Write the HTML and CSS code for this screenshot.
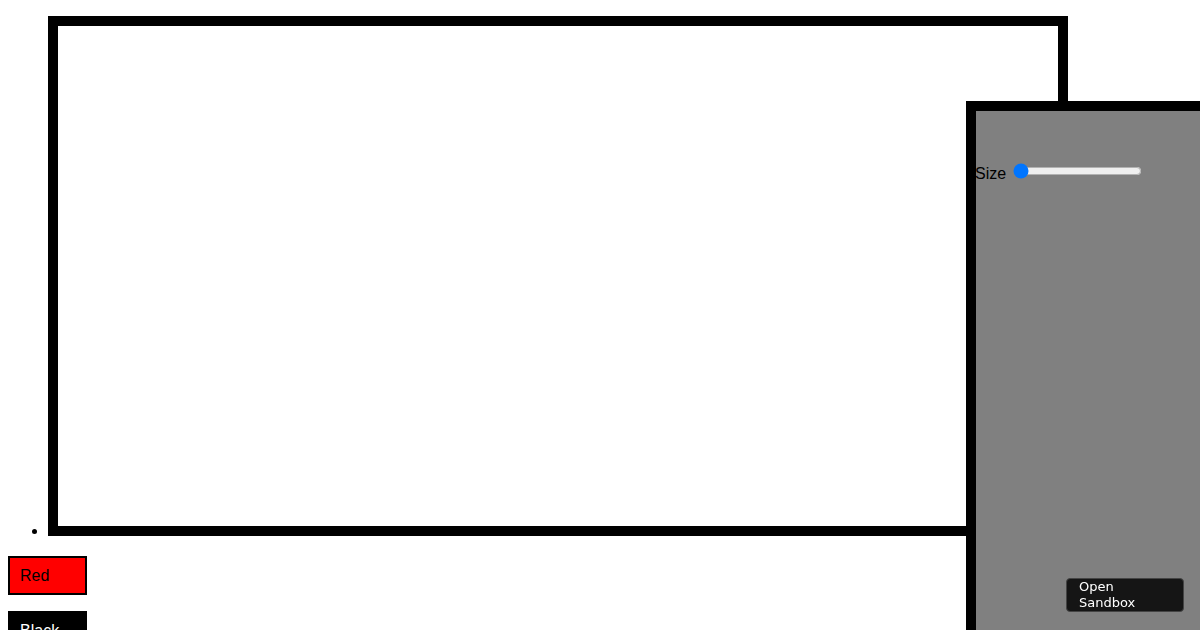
FILE: index.html
```html
<!DOCTYPE html>
<html>
<head>
<meta charset="utf-8">
<title>Paint</title>
<link rel="stylesheet" href="styles.css">
</head>
<body>
<ul class="board-list">
  <li><canvas class="board" width="1000" height="500"></canvas></li>
</ul>
<div class="swatches">
  <button class="swatch swatch-red">Red</button>
  <button class="swatch swatch-black">Black</button>
</div>
<div class="panel">
  <label class="size-label">Size <input class="size-range" type="range" min="1" max="50" value="1"></label>
</div>
<button class="sandbox-btn">Open Sandbox</button>
</body>
</html>
```

FILE: styles.css
```css
body {
  font-family: "Liberation Sans", Arial, sans-serif;
  font-size: 16px;
  color: #000;
}
.board-list {
  margin: 8px 0 16px;
  padding-left: 40px;
}
.board {
  border: 10px solid #000;
  width: 1000px;
  height: 500px;
  background: #fff;
}
.swatches {
  display: flex;
  flex-direction: column;
  align-items: flex-start;
  gap: 16px;
}
.swatch {
  box-sizing: border-box;
  width: 79px;
  height: 39px;
  padding: 0 10px;
  text-align: left;
  font-family: "Liberation Sans", Arial, sans-serif;
  font-size: 16px;
  border: 2px solid #000;
  border-radius: 0;
}
.swatch-red {
  background: #ff0000;
  color: #000;
}
.swatch-black {
  background: #000;
  color: #fff;
}
.panel {
  position: fixed;
  left: 966px;
  top: 101px;
  width: 300px;
  height: 700px;
  background: #808080;
  border: 10px solid #000;
  padding-top: 50px;
  box-sizing: content-box;
}
.size-label {
  display: block;
  margin-left: -1px;
}
.size-range {
  width: 129px;
  margin: 2px;
}
.sandbox-btn {
  position: fixed;
  left: 1066px;
  top: 578px;
  width: 118px;
  height: 34px;
  box-sizing: border-box;
  padding: 0 12px;
  text-align: left;
  background: #151515;
  color: #fff;
  border: 1px solid #444;
  border-radius: 4px;
  font-family: "DejaVu Sans", Verdana, sans-serif;
  font-size: 13px;
  line-height: 16px;
}
```
